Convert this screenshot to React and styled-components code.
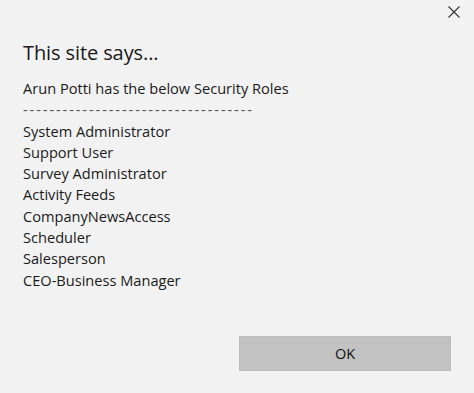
import React from 'react'
import styled, { createGlobalStyle } from 'styled-components'

const roles = [
  'System Administrator',
  'Support User',
  'Survey Administrator',
  'Activity Feeds',
  'CompanyNewsAccess',
  'Scheduler',
  'Salesperson',
  'CEO-Business Manager',
]

function App() {
  return (
    <>
      <GlobalStyle />
      <Dialog>
        <TopBar>
          <CloseButton aria-label="Close">
            <svg width="12" height="12" viewBox="0 0 12 12">
              <path d="M0.5 0.5 L11.5 11.5 M11.5 0.5 L0.5 11.5" stroke="#333" strokeWidth="1.1" fill="none" />
            </svg>
          </CloseButton>
        </TopBar>
        <Body>
          <Title>This site says...</Title>
          <Message>
            <Line>Arun Potti has the below Security Roles</Line>
            <Line dashed>-----------------------------------</Line>
            {roles.map((r) => (
              <Line key={r}>{r}</Line>
            ))}
          </Message>
        </Body>
        <Footer>
          <OkButton>OK</OkButton>
        </Footer>
      </Dialog>
    </>
  )
}

export default App

const GlobalStyle = createGlobalStyle`
  html, body {
    margin: 0;
    padding: 0;
    background: #f2f2f2;
  }
  body {
    font-family: "Open Sans", "Noto Sans", sans-serif;
    color: #1a1a1a;
  }
`

const Dialog = styled.div`
  width: 474px;
  height: 393px;
  background: #f2f2f2;
  display: flex;
  flex-direction: column;
  box-sizing: border-box;
`

const TopBar = styled.div`
  display: flex;
  justify-content: flex-end;
  height: 26px;
  padding: 6px 14px 0 0;
  box-sizing: border-box;
`

const CloseButton = styled.div`
  width: 12px;
  height: 12px;
  display: flex;
`

const Body = styled.div`
  flex: 1;
  padding-left: 23px;
`

const Title = styled.div`
  font-size: 20px;
  line-height: 28px;
  margin-top: 13px;
  letter-spacing: -0.1px;
`

const Message = styled.div`
  margin-top: 11px;
  font-size: 14.6px;
  line-height: 21.3px;
`

const Line = styled.div`
  white-space: pre;
  letter-spacing: ${(p) => (p.dashed ? '1.9px' : 'normal')};
  color: ${(p) => (p.dashed ? '#555' : 'inherit')};
`

const Footer = styled.div`
  display: flex;
  justify-content: flex-end;
  padding: 0 23px 22px 0;
`

const OkButton = styled.div`
  width: 212px;
  height: 35px;
  background: #c2c2c2;
  border: 1px solid #bdbdbd;
  box-sizing: border-box;
  display: flex;
  align-items: center;
  justify-content: center;
  font-size: 14.5px;
  color: #111;
`
